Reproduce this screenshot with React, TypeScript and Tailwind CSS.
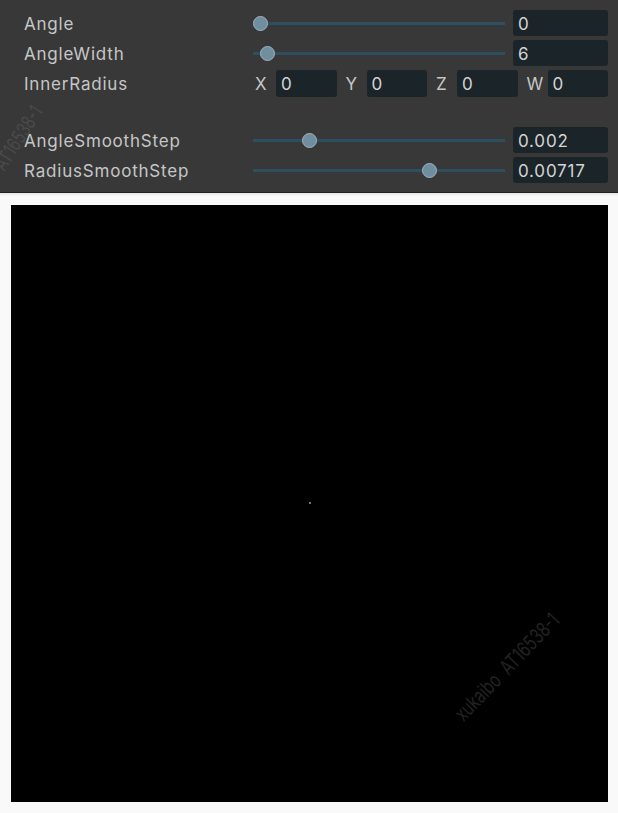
import React from "react";

type SliderRow = { label: string; value: string; pos: number };

const sliders: SliderRow[] = [
  { label: "Angle", value: "0", pos: 0 },
  { label: "AngleWidth", value: "6", pos: 0.031 },
];

const smooth: SliderRow[] = [
  { label: "AngleSmoothStep", value: "0.002", pos: 0.205 },
  { label: "RadiusSmoothStep", value: "0.00717", pos: 0.715 },
];

function Field({ value, className = "" }: { value: string; className?: string }) {
  return (
    <div
      className={`h-[26px] rounded-[3px] bg-[#1b2428] pl-[5px] pt-[1px] text-[17px] leading-[26px] tracking-[0.8px] text-[#d4d4d4] ${className}`}
    >
      {value}
    </div>
  );
}

function Slider({ pos }: { pos: number }) {
  return (
    <div className="relative h-[26px] w-[252px]">
      <div className="absolute left-0 right-0 top-[12px] h-[3px] bg-[#2e4f60]" />
      <div
        className="absolute top-[6px] h-[15px] w-[15px] rounded-full border border-[#a3b3bb] bg-[#6f8e9f]"
        style={{ left: `${pos * 237}px` }}
      />
    </div>
  );
}

function Row({ row }: { row: SliderRow }) {
  return (
    <div className="flex h-[26px] items-center">
      <div className="w-[229px] pt-[3px] text-[17px] tracking-[0.8px] text-[#c6c6c6]">{row.label}</div>
      <Slider pos={row.pos} />
      <Field value={row.value} className="ml-[8px] w-[95px]" />
    </div>
  );
}

export default function App() {
  return (
    <div className="relative h-[813px] w-[618px] overflow-hidden bg-[#f9f9f9] font-['Inter',sans-serif]">
      <div className="relative h-[193px] overflow-hidden border-b border-[#222] bg-[#383838] pl-[24px] pr-[10px] pt-[10px]">
        <div className="flex flex-col gap-[4px]">
          {sliders.map((r) => (
            <Row key={r.label} row={r} />
          ))}
          <div className="flex h-[27px] items-center">
            <div className="w-[231px] pt-[3px] text-[17px] tracking-[0.8px] text-[#c6c6c6]">InnerRadius</div>
            <div className="grid flex-1 grid-cols-4 gap-[9px]">
              {["X", "Y", "Z", "W"].map((k) => (
                <div key={k} className="flex items-center">
                  <span className="w-[21px] pt-[2px] text-[17px] text-[#c6c6c6]">{k}</span>
                  <Field value="0" className="h-[27px] flex-1 leading-[27px]" />
                </div>
              ))}
            </div>
          </div>
        </div>
        <div className="mt-[30px] flex flex-col gap-[4px]">
          {smooth.map((r) => (
            <Row key={r.label} row={r} />
          ))}
        </div>
        <div className="pointer-events-none absolute left-[18px] top-[138px] -translate-x-1/2 -translate-y-1/2 -rotate-[57deg]">
          <span className="block scale-x-[0.72] whitespace-nowrap text-[20px] text-[#4a4a4a]">AT16538-1</span>
        </div>
      </div>
      <div className="h-[3px] bg-gradient-to-b from-[#e4e4e4] to-[#f9f9f9]" />
      <div className="px-[11px] pt-[9px]">
        <div className="relative h-[597px] w-[597px] bg-black">
          <div className="absolute left-[298px] top-[297px] h-[2px] w-[2px] bg-[#777]" />
          <div className="pointer-events-none absolute left-[496px] top-[462px] -translate-x-1/2 -translate-y-1/2 -rotate-[46deg]">
            <span className="block scale-x-[0.72] whitespace-nowrap text-[21px] text-[#222]">
              xukaibo&nbsp;&nbsp;AT16538-1
            </span>
          </div>
        </div>
      </div>
    </div>
  );
}
